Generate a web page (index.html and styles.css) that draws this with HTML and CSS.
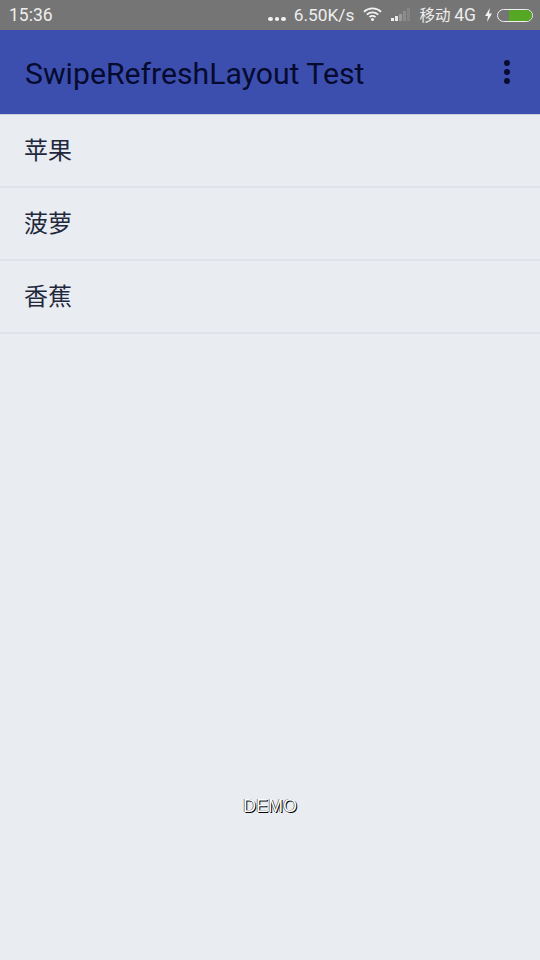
FILE: index.html
```html
<!DOCTYPE html>
<html lang="zh">
<head>
<meta charset="utf-8">
<title>SwipeRefreshLayout Test</title>
<link rel="stylesheet" href="styles.css">
</head>
<body>
<div class="screen">
  <header class="status">
    <span class="time">15:36</span>
    <div class="status-right">
      <span class="dots"><i></i><i></i><i></i></span>
      <span class="speed">6.50K/s</span>
      <svg class="wifi" width="19" height="16" viewBox="0 0 20 16"><g fill="none" stroke="#f2f2f2" stroke-width="1.9"><path d="M1 5.6C6 1 14 1 19 5.6"/><path d="M4 8.6C7.5 5.6 12.5 5.600 16 8.6"/><path d="M6.8 11.2C8.6 9.8 11.4 9.8 13.2 11.2"/></g><circle cx="10" cy="13.8" r="1.6" fill="#f2f2f2"/></svg>
      <svg class="signal" width="20" height="16" viewBox="0 0 20 16"><rect x="0" y="11" width="3" height="3" fill="#f0f0f0"/><rect x="4" y="9" width="3" height="5" fill="#e8e8e8"/><rect x="8" y="7" width="3" height="7" fill="#9a9a9a"/><rect x="12" y="4" width="3" height="10" fill="#8c8c8c"/><rect x="16" y="1" width="3" height="13" fill="#858585"/></svg>
      <span class="carrier">移动 <span class="net">4G</span></span>
      <svg class="bolt" width="9" height="14" viewBox="0 0 9 14"><path d="M6 0 1 8h3L3 14l5-8.500H5z" fill="#f2f2f2"/></svg>
      <div class="battery"><div class="battery-fill"></div></div>
    </div>
  </header>
  <div class="appbar">
    <h1 class="title">SwipeRefreshLayout Test</h1>
    <div class="more"><i></i><i></i><i></i></div>
  </div>
  <ul class="list">
    <li>苹果</li>
    <li>菠萝</li>
    <li>香蕉</li>
  </ul>
  <div class="demo">DEMO</div>
</div>
</body>
</html>
```
FILE: styles.css
```css
* { box-sizing: border-box; }
html, body { margin: 0; padding: 0; }
body { width: 540px; height: 960px; overflow: hidden; background: #e9ecf1; font-family: Roboto, "Noto Sans CJK SC", sans-serif; }
.screen { position: relative; width: 540px; height: 960px; display: flex; flex-direction: column; }
.status { height: 30px; background: #757575; color: #eeeeee; display: flex; align-items: center; justify-content: space-between; padding: 0 7px 0 9px; flex: none; }
.time { font-size: 17.500px; line-height: 32px; }
.status-right { display: flex; align-items: center; }
.dots { display: flex; gap: 2px; margin-top: 8px; margin-right: 8px; }
.dots i { width: 4.500px; height: 4px; border-radius: 50%; background: #f2f2f2; }
.speed { font-size: 17.300px; line-height: 32px; margin-right: 9px; }
.wifi { margin-right: 9px; margin-top: -2px; }
.signal { margin-right: 8px; margin-top: 0; }
.carrier { font-size: 15.500px; line-height: 30px; margin-right: 8px; }
.net { font-size: 17.500px; }
.bolt { margin-right: 4px; }
.battery { width: 36px; height: 13px; border: 1px solid #efefef; border-radius: 6.500px; overflow: hidden; display: flex; justify-content: flex-end; }
.battery-fill { width: 23px; background: #55a724; }
.appbar { height: 84px; background: #3c4fae; display: flex; align-items: center; justify-content: space-between; padding: 3px 30px 0 25px; flex: none; box-shadow: 0 1px 0 #c9cfe0; }
.title { margin: 0; font-size: 30.200px; font-weight: 400; color: #050a2e; line-height: 40px; }
.more { display: flex; flex-direction: column; gap: 3px; margin-top: -3px; }
.more i { width: 6px; height: 6px; border-radius: 50%; background: #080d30; }
.list { list-style: none; margin: 1px 0 0; padding: 0; }
.list li { height: 73px; border-bottom: 2px solid #dfe2e8; padding-left: 24px; font-size: 24px; line-height: 73px; color: #22283c; }
.demo { position: absolute; left: 0; right: 0; top: 796px; text-align: center; font-family: "Liberation Sans", sans-serif; font-size: 18px; line-height: 20px; color: #fff; text-shadow: 1px 1px 0 #000, -0.500px 0 0 #222; }
```
